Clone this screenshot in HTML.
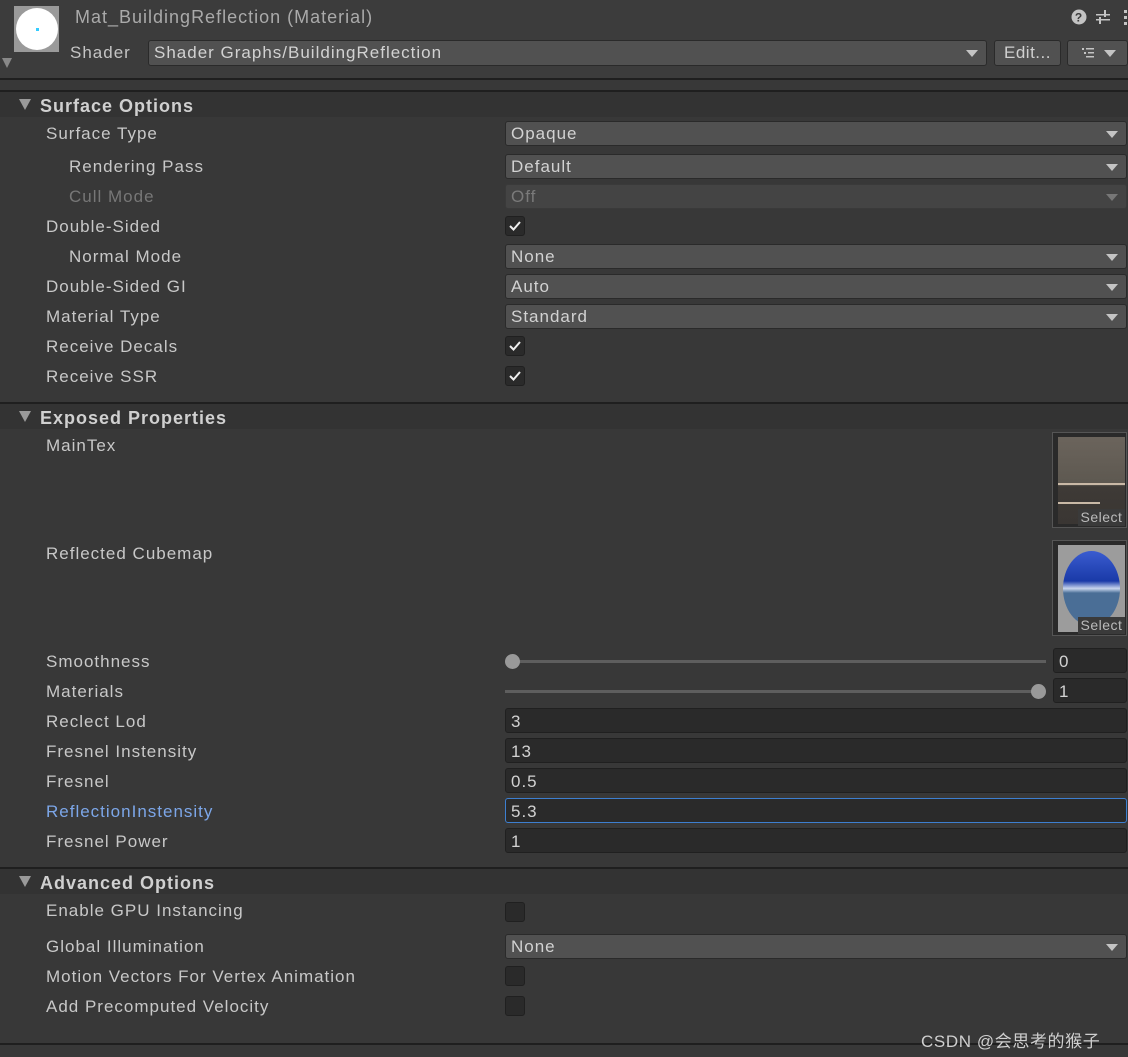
<!DOCTYPE html>
<html><head><meta charset="utf-8"><style>
*{margin:0;padding:0;box-sizing:border-box}
body{width:1128px;height:1057px;background:#383838;position:relative;overflow:hidden;font-family:"Liberation Sans","Noto Sans CJK SC",sans-serif;font-size:17px;color:#c8c8c8;letter-spacing:1px}
.a{position:absolute;white-space:nowrap}
.lbl{position:absolute;left:46px;line-height:20px;margin-top:1px}
.ind{left:69px}
.dd{position:absolute;left:505px;width:622px;height:25px;background:#515151;border:1px solid #2a2a2a;border-radius:3px;padding-left:5px;line-height:23px;color:#d2d2d2}
.dd:after{content:"";position:absolute;right:8px;top:9px;border-left:6px solid transparent;border-right:6px solid transparent;border-top:7px solid #c4c4c4}
.dis{background:#444;color:#7a7a7a;border-color:#3a3a3a}
.dis:after{border-top-color:#777}
.tf{position:absolute;left:505px;width:622px;height:25px;background:#2a2a2a;border:1px solid #202020;border-radius:3px;padding-left:5px;line-height:25px;color:#d2d2d2}
.cb{position:absolute;left:505px;width:20px;height:20px;background:#2a2a2a;border:1px solid #202020;border-radius:3px}
.cb svg{position:absolute;left:2px;top:2px}
.hdr{position:absolute;left:0;width:1128px;height:27px;background:#333;border-top:2px solid #1f1f1f}
.hdr span{position:absolute;left:40px;top:4px;font-weight:bold;color:#d0d0d0;font-size:18px}
.hdr i{position:absolute;left:19px;top:7px;border-left:6px solid transparent;border-right:6px solid transparent;border-top:11px solid #9a9a9a}
</style></head><body>
<div class="a" style="left:0;top:0;width:1128px;height:78px;background:#3c3c3c"></div>
<div class="a" style="left:14px;top:6px;width:45px;height:46px;background:#9a9a9a"></div>
<div class="a" style="left:16px;top:8px;width:42px;height:42px;border-radius:50%;background:#fff"></div>
<div class="a" style="left:36px;top:28px;width:3px;height:3px;background:#3cf"></div>
<div class="a" style="left:2px;top:58px;border-left:5px solid transparent;border-right:5px solid transparent;border-top:10px solid #888"></div>
<div class="a" style="left:75px;top:7px;font-size:18px;color:#aaa">Mat_BuildingReflection (Material)</div>
<div class="a" style="left:70px;top:43px;color:#c4c4c4">Shader</div>
<div class="dd" style="left:148px;top:40px;width:839px;height:26px;line-height:24px">Shader Graphs/BuildingReflection</div>
<div class="a" style="left:994px;top:40px;width:67px;height:26px;background:#515151;border:1px solid #2a2a2a;border-radius:3px;text-align:center;line-height:24px;color:#d0d0d0;letter-spacing:0.5px">Edit...</div>
<div class="a" style="left:1067px;top:40px;width:61px;height:26px;background:#515151;border:1px solid #2a2a2a;border-radius:3px"></div>
<svg class="a" style="left:1080px;top:46px" width="40" height="14"><g fill="#c4c4c4"><rect x="2" y="2" width="2" height="2"/><rect x="6" y="2" width="8" height="1.5"/><rect x="4" y="6" width="2" height="2"/><rect x="8" y="6" width="6" height="1.5"/><rect x="6" y="10" width="8" height="1.5"/><path d="M24 4h12l-6 7z"/></g></svg>
<svg class="a" style="left:1070px;top:8px" width="58" height="18"><circle cx="9" cy="9" r="7.5" fill="#c4c4c4"/><text x="9" y="13.5" font-size="12" font-weight="bold" text-anchor="middle" fill="#3c3c3c" font-family="Liberation Sans">?</text><g fill="#c4c4c4"><rect x="26" y="6" width="14" height="1.5"/><rect x="26" y="11" width="14" height="1.5"/><rect x="34" y="2" width="2" height="7"/><rect x="29" y="9" width="2" height="7"/><rect x="54" y="2" width="3" height="3"/><rect x="54" y="8" width="3" height="3"/><rect x="54" y="14" width="3" height="3"/></g></svg>
<div class="a" style="left:0;top:78px;width:1128px;height:2px;background:#1f1f1f"></div>

<div class="hdr" style="top:90px"><i></i><span>Surface Options</span></div>
<div class="lbl" style="top:123px">Surface Type</div><div class="dd" style="top:121px">Opaque</div>
<div class="lbl ind" style="top:156px">Rendering Pass</div><div class="dd" style="top:154px">Default</div>
<div class="lbl ind" style="top:186px;color:#777">Cull Mode</div><div class="dd dis" style="top:184px">Off</div>
<div class="lbl" style="top:216px">Double-Sided</div><div class="cb" style="top:216px"><svg width="14" height="14"><path d="M2 7l3.5 3.5L12 3" stroke="#eee" stroke-width="2" fill="none"/></svg></div>
<div class="lbl ind" style="top:246px">Normal Mode</div><div class="dd" style="top:244px">None</div>
<div class="lbl" style="top:276px">Double-Sided GI</div><div class="dd" style="top:274px">Auto</div>
<div class="lbl" style="top:306px">Material Type</div><div class="dd" style="top:304px">Standard</div>
<div class="lbl" style="top:336px">Receive Decals</div><div class="cb" style="top:336px"><svg width="14" height="14"><path d="M2 7l3.5 3.5L12 3" stroke="#eee" stroke-width="2" fill="none"/></svg></div>
<div class="lbl" style="top:366px">Receive SSR</div><div class="cb" style="top:366px"><svg width="14" height="14"><path d="M2 7l3.5 3.5L12 3" stroke="#eee" stroke-width="2" fill="none"/></svg></div>

<div class="hdr" style="top:402px"><i></i><span>Exposed Properties</span></div>
<div class="lbl" style="top:435px">MainTex</div>
<div class="a" style="left:1052px;top:432px;width:75px;height:96px;background:#2a2a2a;border:1px solid #555"></div>
<div class="a" style="left:1058px;top:437px;width:67px;height:87px;background:linear-gradient(#6b645c,#5d5850 55%,#3e3a36 57%,#3a3633)"></div>
<div class="a" style="left:1058px;top:483px;width:67px;height:2px;background:#c9b9a6"></div>
<div class="a" style="left:1058px;top:502px;width:42px;height:2px;background:#c9b9a6"></div>
<div class="a" style="left:1078px;top:509px;width:47px;height:17px;background:#3a3a3a;font-size:14px;color:#bbb;line-height:17px;text-align:center;letter-spacing:0.5px">Select</div>
<div class="lbl" style="top:543px">Reflected Cubemap</div>
<div class="a" style="left:1052px;top:540px;width:75px;height:96px;background:#2a2a2a;border:1px solid #555"></div>
<div class="a" style="left:1058px;top:545px;width:67px;height:87px;background:#9c9c9c"></div>
<div class="a" style="left:1063px;top:551px;width:57px;height:75px;border-radius:50%;background:linear-gradient(#3a5cd0,#1a3aa8 40%,#c9d6ee 50%,#4a6e96 56%,#4a6e96)"></div>
<div class="a" style="left:1078px;top:617px;width:47px;height:17px;background:#3a3a3a;font-size:14px;color:#bbb;line-height:17px;text-align:center;letter-spacing:0.5px">Select</div>

<div class="lbl" style="top:651px">Smoothness</div>
<div class="a" style="left:510px;top:660px;width:536px;height:3px;background:#5e5e5e"></div>
<div class="a" style="left:505px;top:654px;width:15px;height:15px;border-radius:50%;background:#999"></div>
<div class="tf" style="left:1053px;top:648px;width:74px">0</div>
<div class="lbl" style="top:681px">Materials</div>
<div class="a" style="left:505px;top:690px;width:536px;height:3px;background:#5e5e5e"></div>
<div class="a" style="left:1031px;top:684px;width:15px;height:15px;border-radius:50%;background:#999"></div>
<div class="tf" style="left:1053px;top:678px;width:74px">1</div>
<div class="lbl" style="top:711px">Reclect Lod</div><div class="tf" style="top:708px">3</div>
<div class="lbl" style="top:741px">Fresnel Instensity</div><div class="tf" style="top:738px">13</div>
<div class="lbl" style="top:771px">Fresnel</div><div class="tf" style="top:768px">0.5</div>
<div class="lbl" style="top:801px;color:#7ca6e8">ReflectionInstensity</div><div class="tf" style="top:798px;border:1px solid #3d7fd0">5.3</div>
<div class="lbl" style="top:831px">Fresnel Power</div><div class="tf" style="top:828px">1</div>

<div class="hdr" style="top:867px"><i></i><span>Advanced Options</span></div>
<div class="lbl" style="top:900px">Enable GPU Instancing</div><div class="cb" style="top:902px"></div>
<div class="lbl" style="top:936px">Global Illumination</div><div class="dd" style="top:934px">None</div>
<div class="lbl" style="top:966px">Motion Vectors For Vertex Animation</div><div class="cb" style="top:966px"></div>
<div class="lbl" style="top:996px">Add Precomputed Velocity</div><div class="cb" style="top:996px"></div>
<div class="a" style="left:0;top:1043px;width:1128px;height:2px;background:#1f1f1f"></div>
<div class="a" style="left:921px;top:1027px;font-size:17px;color:#cfcfcf;letter-spacing:0.6px">CSDN @会思考的猴子</div>
</body></html>
